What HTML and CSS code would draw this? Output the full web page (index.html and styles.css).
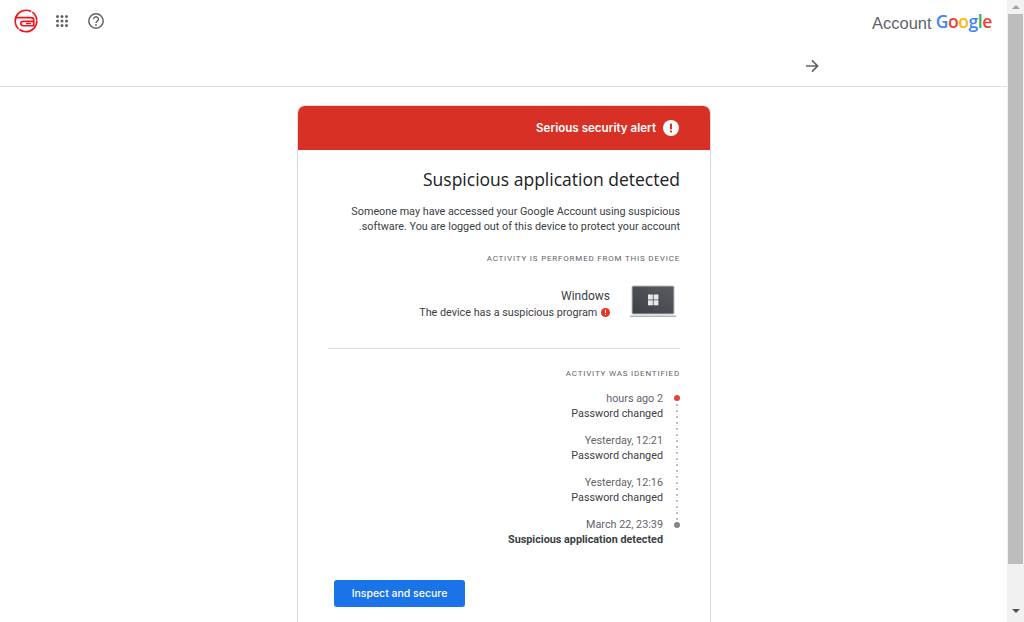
FILE: index.html
```html
<!DOCTYPE html>
<html lang="en">
<head>
<meta charset="utf-8">
<title>Security alert</title>
<link rel="stylesheet" href="styles.css">
</head>
<body>
<div class="window">
  <div class="page">
    <header class="header">
      <div class="topbar">
        <div class="tools">
          <svg class="logo" width="26" height="26" viewBox="0 0 26 26"><circle cx="13" cy="13" r="10.8" fill="none" stroke="#f5101c" stroke-width="1.6" stroke-dasharray="24 1 31 1.2 10"/><path d="M2.6 9.6h15.4q2.8 0 2.8 2.4v1.4H10.4q-2.6 0-2.6 2.2t2.6 2.2h10.4v-4.4" fill="none" stroke="#f5101c" stroke-width="1.6"/><path d="M13 15.6h5" stroke="#f5101c" stroke-width="1.2"/></svg>
          <svg class="apps" width="14" height="14" viewBox="0 0 14 14" fill="#5f6368"><circle cx="2.5" cy="2.5" r="1.5"/><circle cx="7" cy="2.5" r="1.5"/><circle cx="11.5" cy="2.5" r="1.5"/><circle cx="2.5" cy="7" r="1.5"/><circle cx="7" cy="7" r="1.5"/><circle cx="11.5" cy="7" r="1.5"/><circle cx="2.5" cy="11.5" r="1.5"/><circle cx="7" cy="11.5" r="1.5"/><circle cx="11.5" cy="11.5" r="1.5"/></svg>
          <svg class="help" width="18" height="18" viewBox="0 0 18 18"><circle cx="9" cy="9" r="7.2" fill="none" stroke="#5f6368" stroke-width="1.5"/><path d="M6.6 7.2a2.4 2.4 0 1 1 3.7 2c-.9.6-1.3 1-1.3 1.9" fill="none" stroke="#5f6368" stroke-width="1.4"/><circle cx="9" cy="13" r=".9" fill="#5f6368"/></svg>
        </div>
        <div class="brand">
          <span class="brand-account">Account</span>
          <span class="brand-google"><span class="g-blue">G</span><span class="g-red">o</span><span class="g-yellow">o</span><span class="g-blue">g</span><span class="g-green">l</span><span class="g-red">e</span></span>
        </div>
      </div>
      <div class="backrow">
        <svg width="16" height="16" viewBox="0 0 16 16"><path d="M2 8h11.4M8 2.4 13.6 8 8 13.6" fill="none" stroke="#5f6368" stroke-width="1.7"/></svg>
      </div>
    </header>
    <main class="content">
      <section class="card">
        <div class="alert">
          <span class="alert-text">Serious security alert</span>
          <svg width="16" height="16" viewBox="0 0 16 16"><circle cx="8" cy="8" r="8" fill="#fff"/><rect x="7" y="3.5" width="2" height="6" rx=".6" fill="#d93025"/><rect x="7" y="10.6" width="2" height="2" rx=".6" fill="#d93025"/></svg>
        </div>
        <div class="body">
          <h1 class="title">Suspicious application detected</h1>
          <p class="desc">Someone may have accessed your Google Account using suspicious<br>.software. You are logged out of this device to protect your account</p>
          <h2 class="label device-label">ACTIVITY IS PERFORMED FROM THIS DEVICE</h2>
          <div class="device">
            <div class="device-text">
              <div class="device-name">Windows</div>
              <div class="device-note">The device has a suspicious program
                <svg width="9" height="9" viewBox="0 0 9 9"><circle cx="4.5" cy="4.5" r="4.5" fill="#ea3323"/><rect x="4" y="1.8" width="1" height="3.2" fill="#fff"/><rect x="4" y="5.9" width="1" height="1.1" fill="#fff"/></svg>
              </div>
            </div>
            <svg class="laptop" width="46" height="33" viewBox="0 0 46 33"><defs><linearGradient id="screen" x1="0" y1="1" x2="1" y2="0"><stop offset="0" stop-color="#3c3f43"/><stop offset="1" stop-color="#5a5d61"/></linearGradient></defs><rect x="2" y="1" width="42" height="28" rx="1" fill="url(#screen)" stroke="#b9bcc0"/><rect x="0" y="30.5" width="46" height="1.6" fill="#b4b6b9"/><g fill="#fff" opacity=".88"><rect x="18" y="9.5" width="4.8" height="5"/><rect x="23.6" y="9.5" width="4.8" height="5"/><rect x="18" y="15.3" width="4.8" height="5"/><rect x="23.6" y="15.3" width="4.8" height="5"/></g></svg>
          </div>
          <hr class="divider">
          <h2 class="label activity-label">ACTIVITY WAS IDENTIFIED</h2>
          <div class="timeline">
            <ul class="events">
              <li class="event"><span class="when">hours ago 2</span><span class="what">Password changed</span></li>
              <li class="event"><span class="when">Yesterday, 12:21</span><span class="what">Password changed</span></li>
              <li class="event"><span class="when">Yesterday, 12:16</span><span class="what">Password changed</span></li>
              <li class="event"><span class="when">March 22, 23:39</span><span class="what strong">Suspicious application detected</span></li>
            </ul>
            <div class="rail"><span class="dot dot-red"></span><span class="dots"></span><span class="dot dot-grey"></span></div>
          </div>
          <div class="actions"><button class="btn" type="button">Inspect and secure</button></div>
        </div>
      </section>
    </main>
  </div>
  <div class="scrollbar">
    <span class="arrow-up"></span>
    <span class="thumb"></span>
    <span class="arrow-down"></span>
  </div>
</div>
</body>
</html>
```
FILE: styles.css
```css
* { box-sizing: border-box; }
html, body { margin: 0; height: 100%; overflow: hidden; background: #fff; }
body { font-family: Roboto, "Liberation Sans", sans-serif; color: #3c4043; }
.window { display: flex; height: 622px; width: 1024px; }
.page { width: 1007px; flex: none; overflow: hidden; }
.header { height: 87px; border-bottom: 1px solid #dadce0; }
.topbar { display: flex; justify-content: space-between; height: 45px; padding: 8px 15px 0 13px; }
.tools { display: flex; align-items: flex-start; }
.logo { margin-right: 16px; }
.apps { margin-top: 6px; margin-right: 19px; }
.help { margin-top: 4px; margin-left: -1px; }
.brand { display: flex; align-items: baseline; gap: 4px; height: 30px; padding-top: 2px; }
.brand-account { font-family: "Liberation Sans", sans-serif; font-size: 16.5px; color: #5f6368; }
.brand-google { font-family: "Open Sans", sans-serif; font-size: 17.5px; font-weight: 600; letter-spacing: -.4px; position: relative; top: -1px; }
.g-blue { color: #4285f4; } .g-red { color: #ea4335; } .g-yellow { color: #fbbc05; } .g-green { color: #34a853; }
.backrow { display: flex; justify-content: flex-end; padding: 13px 187px 0 0; }
.content { display: flex; justify-content: center; padding: 18px 0 0 1px; }
.card { width: 414px; height: 560px; border: 1px solid #dadce0; border-radius: 8px; overflow: hidden; flex: none; }
.alert { height: 44px; background: #d93025; display: flex; justify-content: flex-end; align-items: center; gap: 7px; padding: 0 32px 0 0; margin: 0 -1px; }
.alert-text { font-family: Inter, sans-serif; font-size: 11.6px; font-weight: 600; color: #fff; }
.body { padding: 18px 30px 0; text-align: right; }
.title { margin: 0; font-family: "Open Sans", sans-serif; font-size: 17.5px; line-height: 22px; font-weight: 400; color: #202124; }
.desc { margin: 14px 0 0; font-size: 10.8px; line-height: 15px; color: #3c4043; }
.label { margin: 0; font-size: 8px; line-height: 12px; font-weight: 400; letter-spacing: .8px; color: #5f6368; }
.device-label { margin-top: 19px; }
.device { display: flex; justify-content: flex-end; align-items: flex-start; gap: 20px; margin-top: 20px; padding-right: 4px; height: 48px; }
.device-text { padding-top: 3px; }
.device-name { font-size: 12px; line-height: 16px; color: #3c4043; }
.device-note { font-size: 10.8px; line-height: 16px; margin-top: 1px; color: #3c4043; }
.device-note svg { margin-left: 1px; vertical-align: -0.5px; }
.divider { margin: 15px 0 0; border: 0; border-top: 1px solid #dadce0; }
.activity-label { margin-top: 19px; }
.timeline { display: flex; justify-content: flex-end; gap: 11px; margin-top: 11px; }
.events { margin: 0; padding: 0; list-style: none; }
.event { display: flex; flex-direction: column; height: 42px; font-size: 10.8px; line-height: 15px; }
.when { color: #5f6368; }
.what { color: #3c4043; }
.strong { font-weight: 700; color: #3c4043; }
.rail { display: flex; flex-direction: column; align-items: center; width: 6px; padding-top: 4px; }
.dot { width: 6px; height: 6px; border-radius: 50%; flex: none; }
.dot-red { background: #ea4335; }
.dot-grey { background: #80868b; }
.dots { height: 118px; width: 2px; background: repeating-linear-gradient(to bottom, #bcbfc3 0 2px, transparent 2px 6px); margin-top: 3px; }
.actions { display: flex; justify-content: flex-start; margin-top: 21px; padding-left: 6px; }
.btn { width: 131px; height: 27px; border: 0; border-radius: 3px; background: #1a73e8; color: #fff; font-family: Inter, sans-serif; font-size: 10.5px; font-weight: 500; padding: 0; }
.scrollbar { width: 17px; flex: none; background: #f1f1f1; display: flex; flex-direction: column; align-items: center; }
.arrow-up { margin-top: 5px; width: 0; height: 0; border: 4px solid transparent; border-top: 0; border-bottom: 4px solid #a3a3a3; }
.thumb { width: 15px; height: 550px; margin-top: 5px; background: #bdbdbd; }
.arrow-down { margin-top: 45px; width: 0; height: 0; border: 4px solid transparent; border-bottom: 0; border-top: 4px solid #505050; }
```
